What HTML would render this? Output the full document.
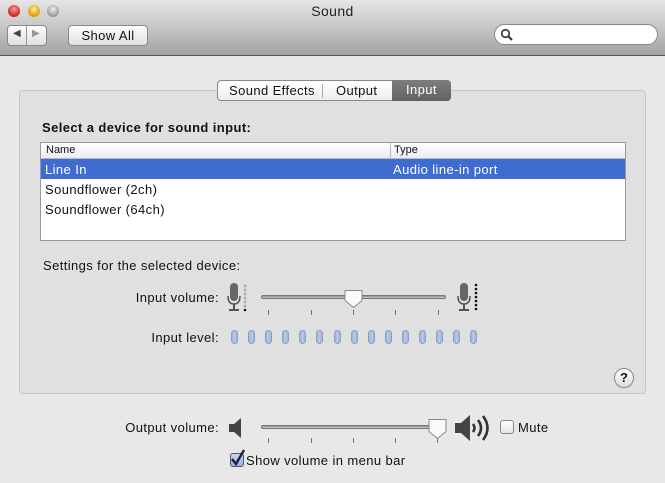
<!DOCTYPE html><html><head><style>
body{margin:0;width:665px;height:483px;background:#e8e8e8;font-family:"Liberation Sans",sans-serif;font-size:13px;letter-spacing:0.4px;color:#111;position:relative;overflow:hidden}
.a{position:absolute}
.tb{left:0;top:0;width:665px;height:55px;background:linear-gradient(#e6e6e6,#c2c2c2 55%,#a2a2a2);border-bottom:1px solid #555}
.btn{background:linear-gradient(#fdfdfd,#e0e0e0);border:1px solid #888;border-radius:4px;box-sizing:border-box}
.dot{width:12px;height:12px;border-radius:50%;top:5px}
.tick{width:1px;height:5px;background:#777}
.pill{width:7px;height:14px;border-radius:4px;background:linear-gradient(90deg,#9fb0d6,#bccbea,#9fb0d6);border:1px solid #8d9cc0;box-sizing:border-box;top:330px}
.track{height:4px;border-radius:2px;background:linear-gradient(#8a8a8a,#cfcfcf);border:1px solid #777;box-sizing:border-box}
.cb{width:14px;height:14px;border:1px solid #888;border-radius:3px;background:linear-gradient(#fff,#e4e4e4);box-sizing:border-box}
</style></head><body>
<div class="a tb"></div>
<div class="a dot" style="left:8px;background:radial-gradient(circle at 50% 35%,#f99,#c22 70%)"></div>
<div class="a dot" style="left:28px;background:radial-gradient(circle at 50% 35%,#fe9,#d90 70%)"></div>
<div class="a dot" style="left:47px;background:radial-gradient(circle at 50% 35%,#eee,#999 70%)"></div>
<div class="a" style="left:0;width:665px;top:3px;text-align:center;font-size:14px;color:#222">Sound</div>
<div class="a btn" style="left:7px;top:25px;width:40px;height:21px"></div>
<div class="a" style="left:26px;top:26px;width:1px;height:19px;background:#999"></div>
<div class="a" style="left:13px;top:28px;font-size:10px;color:#444">◀</div>
<div class="a" style="left:32px;top:28px;font-size:10px;color:#999">▶</div>
<div class="a btn" style="left:68px;top:25px;width:80px;height:21px;text-align:center;line-height:19px">Show All</div>
<div class="a" style="left:494px;top:24px;width:164px;height:21px;border:1px solid #888;border-radius:11px;background:#fff;box-sizing:border-box"></div>
<svg class="a" style="left:500px;top:28px" width="14" height="14"><circle cx="5.5" cy="5.5" r="3.8" fill="none" stroke="#333" stroke-width="1.6"/><line x1="8.5" y1="8.5" x2="12" y2="12" stroke="#333" stroke-width="2"/></svg>
<div class="a" style="left:19px;top:90px;width:627px;height:304px;background:#e0e0e0;border:1px solid #c6c6c6;border-radius:4px;box-sizing:border-box"></div>
<div class="a btn" style="left:217px;top:80px;width:234px;height:21px;border-radius:4px;background:linear-gradient(#fff,#eee)"></div>
<div class="a" style="left:229px;top:83px">Sound Effects</div>
<div class="a" style="left:322px;top:84px;width:1px;height:14px;background:#aaa"></div>
<div class="a" style="left:336px;top:83px">Output</div>
<div class="a" style="left:392px;top:80px;width:59px;height:21px;background:linear-gradient(#7d7d7d,#626262);border-radius:0 4px 4px 0;color:#fff;text-align:center;line-height:20px;box-sizing:border-box">Input</div>
<div class="a" style="left:42px;top:120px;font-weight:bold">Select a device for sound input:</div>
<div class="a" style="left:40px;top:142px;width:586px;height:99px;background:#fff;border:1px solid #999;box-sizing:border-box"></div>
<div class="a" style="left:41px;top:143px;width:584px;height:15px;background:linear-gradient(#fff,#ececec);border-bottom:1px solid #bbb;font-size:11px;line-height:15px;letter-spacing:0"><span style="position:absolute;left:5px">Name</span><span style="position:absolute;left:349px;top:0;width:1px;height:15px;background:#bbb"></span><span style="position:absolute;left:353px">Type</span></div>
<div class="a" style="left:41px;top:159px;width:584px;height:20px;background:#3f6cd0"></div>
<div class="a" style="left:45px;top:162px;color:#fff">Line In</div>
<div class="a" style="left:393px;top:162px;color:#fff">Audio line-in port</div>
<div class="a" style="left:45px;top:182px">Soundflower (2ch)</div>
<div class="a" style="left:45px;top:202px">Soundflower (64ch)</div>
<div class="a" style="left:43px;top:258px">Settings for the selected device:</div>
<div class="a" style="left:90px;width:129px;text-align:right;top:290px">Input volume:</div>
<div class="a" style="left:90px;width:129px;text-align:right;top:330px">Input level:</div>
<svg class="a" style="left:226px;top:282px" width="22" height="32"><rect x="4" y="1" width="8" height="18" rx="4" fill="#666"/><path d="M2 14 q0 8 6 8 q6 0 6-8" fill="none" stroke="#555" stroke-width="1.5"/><rect x="7" y="22" width="2" height="5" fill="#555"/><rect x="3" y="27" width="10" height="2" fill="#555"/><g fill="none" stroke="#999" stroke-width=".7"><circle cx="19" cy="4" r="1"/><circle cx="19" cy="8" r="1"/><circle cx="19" cy="12" r="1"/><circle cx="19" cy="16" r="1"/><circle cx="19" cy="20" r="1"/><circle cx="19" cy="24" r="1"/></g><circle cx="19" cy="28" r="1.3" fill="#111"/></svg>
<svg class="a" style="left:456px;top:282px" width="24" height="32"><rect x="4" y="1" width="8" height="18" rx="4" fill="#666"/><path d="M2 14 q0 8 6 8 q6 0 6-8" fill="none" stroke="#555" stroke-width="1.5"/><rect x="7" y="22" width="2" height="5" fill="#555"/><rect x="3" y="27" width="10" height="2" fill="#555"/><g fill="#111"><circle cx="20" cy="3" r="1.3"/><circle cx="20" cy="7" r="1.3"/><circle cx="20" cy="11" r="1.3"/><circle cx="20" cy="15" r="1.3"/><circle cx="20" cy="19" r="1.3"/><circle cx="20" cy="23" r="1.3"/><circle cx="20" cy="27" r="1.3"/></g></svg>
<div class="a track" style="left:261px;top:295px;width:185px"></div>
<div class="a tick" style="left:268px;top:310px"></div><div class="a tick" style="left:311px;top:310px"></div><div class="a tick" style="left:353px;top:310px"></div><div class="a tick" style="left:395px;top:310px"></div><div class="a tick" style="left:438px;top:310px"></div>
<svg class="a" style="left:343px;top:289px" width="21" height="20"><path d="M2 1.5h17v10l-8.5 7l-8.5-7z" fill="#fafafa" stroke="#888"/></svg>
<div class="a pill" style="left:231px"></div><div class="a pill" style="left:248px"></div><div class="a pill" style="left:265px"></div><div class="a pill" style="left:282px"></div><div class="a pill" style="left:299px"></div><div class="a pill" style="left:316px"></div><div class="a pill" style="left:334px"></div><div class="a pill" style="left:351px"></div><div class="a pill" style="left:368px"></div><div class="a pill" style="left:385px"></div><div class="a pill" style="left:402px"></div><div class="a pill" style="left:419px"></div><div class="a pill" style="left:436px"></div><div class="a pill" style="left:453px"></div><div class="a pill" style="left:470px"></div>
<div class="a" style="left:614px;top:368px;width:20px;height:20px;border-radius:50%;border:1px solid #888;background:linear-gradient(#fff,#ddd);box-sizing:border-box;text-align:center;font-weight:bold;line-height:18px;font-size:13px;letter-spacing:0">?</div>
<div class="a" style="left:90px;width:129px;text-align:right;top:420px">Output volume:</div>
<svg class="a" style="left:228px;top:417px" width="16" height="22"><path d="M1 7h5l7-6v20l-7-6h-5z" fill="#444"/></svg>
<svg class="a" style="left:454px;top:413px" width="36" height="30"><path d="M1 10h6l9-8v26l-9-8h-6z" fill="#444"/><g fill="none" stroke="#333" stroke-width="2.6"><path d="M19 11q3 4 0 8"/><path d="M24 7q6 8 0 16"/><path d="M29 3q9 12 0 24"/></g></svg>
<div class="a track" style="left:261px;top:425px;width:185px"></div>
<div class="a tick" style="left:268px;top:438px"></div><div class="a tick" style="left:311px;top:438px"></div><div class="a tick" style="left:353px;top:438px"></div><div class="a tick" style="left:395px;top:438px"></div><div class="a tick" style="left:437px;top:438px"></div>
<svg class="a" style="left:427px;top:418px" width="21" height="22"><path d="M2 1.5h17v12l-8.5 7l-8.5-7z" fill="#fafafa" stroke="#888"/></svg>
<div class="a cb" style="left:500px;top:420px"></div>
<div class="a" style="left:518px;top:420px">Mute</div>
<div class="a cb" style="left:230px;top:453px;border-color:#556;background:linear-gradient(#c9d8f2,#8fb0e6)"></div>
<svg class="a" style="left:229px;top:449px" width="17" height="18"><path d="M3 10l4 5l8-14" fill="none" stroke="#223" stroke-width="2.4"/></svg>
<div class="a" style="left:246px;top:453px">Show volume in menu bar</div>
</body></html>
